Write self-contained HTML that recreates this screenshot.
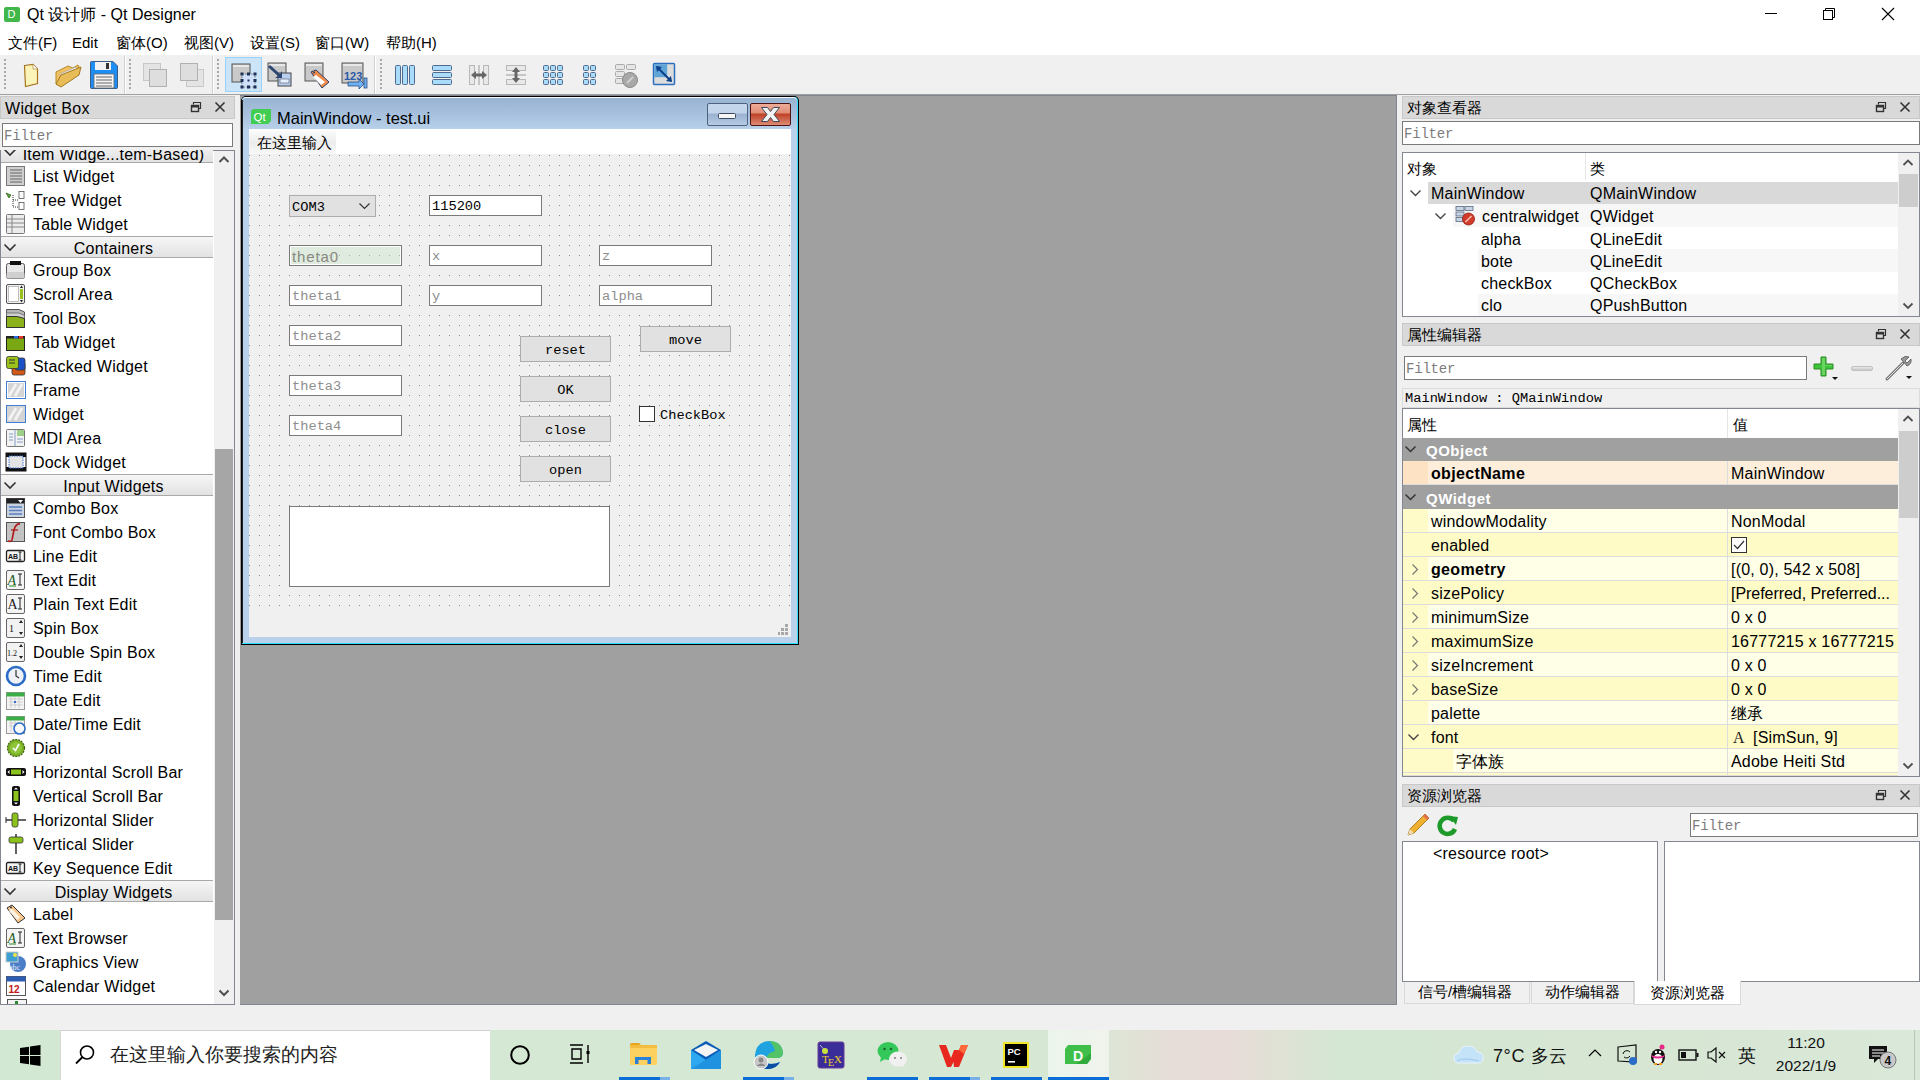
<!DOCTYPE html><html><head><meta charset="utf-8"><style>
*{margin:0;padding:0;box-sizing:border-box}
html,body{width:1920px;height:1080px;overflow:hidden;background:#f0f0f0;font-family:"Liberation Sans",sans-serif;color:#000;position:relative}
.a{position:absolute}
.t{position:absolute;white-space:nowrap;line-height:1}
svg{position:absolute;overflow:visible}
</style></head><body>

<div class="a" style="left:0px;top:0px;width:1920px;height:55px;background:#fff"></div>
<div class="a" style="left:0px;top:55px;width:1920px;height:39px;background:#f0f0f0"></div>
<div class="a" style="left:0px;top:94px;width:1920px;height:1px;background:#a0a0a0"></div>
<div class="a" style="left:4px;top:7px;width:16px;height:15px;background:#41b649;border-radius:2px"></div>
<div class="t" style="left:7.5px;top:9.4px;font-size:11px;color:#fff;font-family:'Liberation Sans',sans-serif;font-weight:normal;letter-spacing:0px;">D</div>
<div class="t" style="left:27px;top:7.2px;font-size:16px;color:#000;font-family:'Liberation Sans',sans-serif;font-weight:normal;letter-spacing:0px;">Qt 设计师 - Qt Designer</div>
<div class="a" style="left:1765px;top:13px;width:12px;height:1px;background:#000"></div>
<svg style="left:1820px;top:5px" width="20" height="20"><rect x="3.5" y="5.5" width="9" height="9" fill="none" stroke="#000"/><path d="M5.5 5.5V3.5H14.5V12.5H12.5" fill="none" stroke="#000"/></svg>
<svg style="left:1880px;top:6px" width="16" height="16"><path d="M2 2L14 14M14 2L2 14" stroke="#000" stroke-width="1.1"/></svg>
<div class="t" style="left:8px;top:35.2px;font-size:15px;color:#000;font-family:'Liberation Sans',sans-serif;font-weight:normal;letter-spacing:0px;">文件(F)</div>
<div class="t" style="left:72px;top:35.2px;font-size:15px;color:#000;font-family:'Liberation Sans',sans-serif;font-weight:normal;letter-spacing:0px;">Edit</div>
<div class="t" style="left:116px;top:35.2px;font-size:15px;color:#000;font-family:'Liberation Sans',sans-serif;font-weight:normal;letter-spacing:0px;">窗体(O)</div>
<div class="t" style="left:184px;top:35.2px;font-size:15px;color:#000;font-family:'Liberation Sans',sans-serif;font-weight:normal;letter-spacing:0px;">视图(V)</div>
<div class="t" style="left:250px;top:35.2px;font-size:15px;color:#000;font-family:'Liberation Sans',sans-serif;font-weight:normal;letter-spacing:0px;">设置(S)</div>
<div class="t" style="left:315px;top:35.2px;font-size:15px;color:#000;font-family:'Liberation Sans',sans-serif;font-weight:normal;letter-spacing:0px;">窗口(W)</div>
<div class="t" style="left:386px;top:35.2px;font-size:15px;color:#000;font-family:'Liberation Sans',sans-serif;font-weight:normal;letter-spacing:0px;">帮助(H)</div>
<div class="a" style="left:4px;top:59px;width:2px;height:2px;background:#a8a8a8"></div>
<div class="a" style="left:4px;top:63px;width:2px;height:2px;background:#a8a8a8"></div>
<div class="a" style="left:4px;top:67px;width:2px;height:2px;background:#a8a8a8"></div>
<div class="a" style="left:4px;top:71px;width:2px;height:2px;background:#a8a8a8"></div>
<div class="a" style="left:4px;top:75px;width:2px;height:2px;background:#a8a8a8"></div>
<div class="a" style="left:4px;top:79px;width:2px;height:2px;background:#a8a8a8"></div>
<div class="a" style="left:4px;top:83px;width:2px;height:2px;background:#a8a8a8"></div>
<div class="a" style="left:4px;top:87px;width:2px;height:2px;background:#a8a8a8"></div>
<div class="a" style="left:129px;top:59px;width:2px;height:2px;background:#a8a8a8"></div>
<div class="a" style="left:129px;top:63px;width:2px;height:2px;background:#a8a8a8"></div>
<div class="a" style="left:129px;top:67px;width:2px;height:2px;background:#a8a8a8"></div>
<div class="a" style="left:129px;top:71px;width:2px;height:2px;background:#a8a8a8"></div>
<div class="a" style="left:129px;top:75px;width:2px;height:2px;background:#a8a8a8"></div>
<div class="a" style="left:129px;top:79px;width:2px;height:2px;background:#a8a8a8"></div>
<div class="a" style="left:129px;top:83px;width:2px;height:2px;background:#a8a8a8"></div>
<div class="a" style="left:129px;top:87px;width:2px;height:2px;background:#a8a8a8"></div>
<div class="a" style="left:217px;top:59px;width:2px;height:2px;background:#a8a8a8"></div>
<div class="a" style="left:217px;top:63px;width:2px;height:2px;background:#a8a8a8"></div>
<div class="a" style="left:217px;top:67px;width:2px;height:2px;background:#a8a8a8"></div>
<div class="a" style="left:217px;top:71px;width:2px;height:2px;background:#a8a8a8"></div>
<div class="a" style="left:217px;top:75px;width:2px;height:2px;background:#a8a8a8"></div>
<div class="a" style="left:217px;top:79px;width:2px;height:2px;background:#a8a8a8"></div>
<div class="a" style="left:217px;top:83px;width:2px;height:2px;background:#a8a8a8"></div>
<div class="a" style="left:217px;top:87px;width:2px;height:2px;background:#a8a8a8"></div>
<div class="a" style="left:380px;top:59px;width:2px;height:2px;background:#a8a8a8"></div>
<div class="a" style="left:380px;top:63px;width:2px;height:2px;background:#a8a8a8"></div>
<div class="a" style="left:380px;top:67px;width:2px;height:2px;background:#a8a8a8"></div>
<div class="a" style="left:380px;top:71px;width:2px;height:2px;background:#a8a8a8"></div>
<div class="a" style="left:380px;top:75px;width:2px;height:2px;background:#a8a8a8"></div>
<div class="a" style="left:380px;top:79px;width:2px;height:2px;background:#a8a8a8"></div>
<div class="a" style="left:380px;top:83px;width:2px;height:2px;background:#a8a8a8"></div>
<div class="a" style="left:380px;top:87px;width:2px;height:2px;background:#a8a8a8"></div>
<div class="a" style="left:124px;top:56px;width:1px;height:38px;background:#d0d0d0"></div>
<div class="a" style="left:125px;top:56px;width:1px;height:38px;background:#fff"></div>
<div class="a" style="left:212px;top:56px;width:1px;height:38px;background:#d0d0d0"></div>
<div class="a" style="left:213px;top:56px;width:1px;height:38px;background:#fff"></div>
<div class="a" style="left:374px;top:56px;width:1px;height:38px;background:#d0d0d0"></div>
<div class="a" style="left:375px;top:56px;width:1px;height:38px;background:#fff"></div>
<svg style="left:22px;top:62px" width="18" height="26"><path d="M2.5 3.5L11 2.5L15.5 7V21.5L3.5 24.5Z" fill="#fbf4b8" stroke="#a6741f" stroke-width="1.2"/><path d="M11 2.5V7H15.5" fill="#fff" stroke="#b89650" stroke-width="0.8"/></svg>
<svg style="left:54px;top:62px" width="28" height="28"><path d="M2 10L14 4L19 6L24 3L25 5L6 24L2 22Z" fill="#f1c15f" stroke="#b58a2b"/><path d="M6 12L22 5L24 8L8 22Z" fill="#f4f4f4" stroke="#a0a0a0" stroke-width=".6"/><path d="M2 22L7 13L27 5L25 13L7 25Z" fill="#e8bd57" stroke="#a07a25"/></svg>
<svg style="left:89px;top:60px" width="30" height="30"><path d="M1.5 2.5Q1.5 1.5 2.5 1.5H24L28.5 6V27.5Q28.5 28.5 27.5 28.5H2.5Q1.5 28.5 1.5 27.5Z" fill="#1e8ef5" stroke="#3a5c85"/><rect x="6" y="2" width="16" height="8" fill="#f2f2f2"/><rect x="17" y="3" width="3" height="6" fill="#333"/><rect x="5" y="14" width="20" height="14" fill="#f4f4f4" stroke="#666" stroke-width=".8"/><path d="M7 17H23M7 20H23M7 23H23M7 26H23" stroke="#666" stroke-width="1"/></svg>
<svg style="left:142px;top:62px" width="28" height="26"><rect x="1.5" y="1.5" width="17" height="17" fill="#e4e4e4" stroke="#c8c8c8"/><rect x="7.5" y="7.5" width="17" height="17" fill="#dedede" stroke="#b0b0b0"/></svg>
<svg style="left:179px;top:62px" width="28" height="26"><rect x="7.5" y="7.5" width="17" height="17" fill="#e4e4e4" stroke="#c8c8c8"/><rect x="1.5" y="1.5" width="17" height="17" fill="#dedede" stroke="#b0b0b0"/></svg>
<div class="a" style="left:225px;top:57px;width:37px;height:35px;background:#cce4f7;border:1px solid #99d1ff"></div>
<svg style="left:231px;top:63px" width="20" height="20"><rect x="1" y="1" width="18" height="18" fill="#c9c9c9" stroke="#555" stroke-width="1"/><rect x="2" y="2" width="16" height="2" fill="#e8e8e8"/></svg>
<svg style="left:240px;top:72px" width="18" height="18"><rect x="2" y="2" width="13" height="13" fill="#cfe0fb" stroke="#333" stroke-width=".6" stroke-dasharray="1.5 1.5"/><g fill="#1f2f55"><rect x="0.5" y="0.5" width="3" height="3"/><rect x="13.5" y="0.5" width="3" height="3"/><rect x="0.5" y="13.5" width="3" height="3"/><rect x="13.5" y="13.5" width="3" height="3"/><rect x="7" y="0.5" width="3" height="3"/><rect x="7" y="13.5" width="3" height="3"/><rect x="0.5" y="7" width="3" height="3"/><rect x="13.5" y="7" width="3" height="3"/><rect x="7.5" y="7.5" width="2" height="2"/></g></svg>
<svg style="left:267px;top:62px" width="20" height="20"><rect x="1" y="1" width="18" height="18" fill="#c9c9c9" stroke="#555" stroke-width="1"/><rect x="2" y="2" width="16" height="2" fill="#e8e8e8"/></svg>
<svg style="left:277px;top:72px" width="16" height="16"><rect x="1" y="1" width="13" height="13" fill="#b9cff0" stroke="#444"/><rect x="3" y="7" width="9" height="4" fill="#e6efff" stroke="#556" stroke-width=".6"/></svg>
<svg style="left:268px;top:64px" width="16" height="16"><path d="M2 1L12 10L14 7L14 14L7 14L10 12L0 3Z" fill="#2c4670"/></svg>
<svg style="left:304px;top:62px" width="20" height="20"><rect x="1" y="1" width="18" height="18" fill="#c9c9c9" stroke="#555" stroke-width="1"/><rect x="2" y="2" width="16" height="2" fill="#e8e8e8"/></svg>
<svg style="left:309px;top:68px" width="22" height="22"><path d="M2 4L7 2L20 14L13 20Z" fill="#f28a4a" stroke="#27406a" stroke-width="1"/><path d="M7 7L16 14L12 17L4 9Z" fill="#fff"/><circle cx="5" cy="4.5" r="1" fill="#27406a"/></svg>
<svg style="left:341px;top:62px" width="23" height="22"><rect x="1" y="1" width="21" height="20" fill="#c9c9c9" stroke="#555" stroke-width="1"/><rect x="2" y="2" width="19" height="2" fill="#e8e8e8"/></svg>
<svg style="left:342px;top:68px" width="26" height="22"><text x="2" y="12" font-family="Liberation Sans" font-size="11" font-weight="bold" fill="#2a5aa8">123</text><path d="M6 14H17V11L22 16L17 21V18H6Z" fill="#6fb0f0" stroke="#2a4f80" stroke-width=".8"/><rect x="22" y="10" width="3" height="10" fill="#6fb0f0" stroke="#2a4f80" stroke-width=".8"/></svg>
<svg style="left:394px;top:64px" width="24" height="24"><g fill="#a8dcfa" stroke="#4f6a8f" stroke-width="1"><rect x="1.5" y="1.5" width="5" height="19" rx="1"/><rect x="8.5" y="1.5" width="5" height="19" rx="1"/><rect x="15.5" y="1.5" width="5" height="19" rx="1"/></g></svg>
<svg style="left:431px;top:64px" width="24" height="24"><g fill="#a8dcfa" stroke="#4f6a8f" stroke-width="1"><rect x="1.5" y="1.5" width="19" height="5" rx="1"/><rect x="1.5" y="8.5" width="19" height="5" rx="1"/><rect x="1.5" y="15.5" width="19" height="5" rx="1"/></g></svg>
<svg style="left:468px;top:64px" width="24" height="24"><g fill="#e8e8e8" stroke="#b8b8b8"><rect x="1.5" y="1.5" width="5" height="19"/><rect x="15.5" y="1.5" width="5" height="19"/></g><path d="M3 11L8 7V9.5H14V7L19 11L14 15V12.5H8V15Z" fill="#666"/><path d="M11 1V21" stroke="#666" stroke-width=".6"/></svg>
<svg style="left:505px;top:64px" width="24" height="24"><g fill="#e8e8e8" stroke="#b8b8b8"><rect x="1.5" y="1.5" width="19" height="5"/><rect x="1.5" y="15.5" width="19" height="5"/></g><path d="M11 3L15 8H12.5V14H15L11 19L7 14H9.5V8H7Z" fill="#666"/><path d="M1 11H21" stroke="#666" stroke-width=".6"/></svg>
<svg style="left:542px;top:64px" width="23" height="23"><g fill="#a8dcfa" stroke="#4f6a8f" stroke-width="1"><rect x="1.5" y="1.5" width="5" height="5" rx="1"/><rect x="1.5" y="8.5" width="5" height="5" rx="1"/><rect x="1.5" y="15.5" width="5" height="5" rx="1"/><rect x="8.5" y="1.5" width="5" height="5" rx="1"/><rect x="8.5" y="8.5" width="5" height="5" rx="1"/><rect x="8.5" y="15.5" width="5" height="5" rx="1"/><rect x="15.5" y="1.5" width="5" height="5" rx="1"/><rect x="15.5" y="8.5" width="5" height="5" rx="1"/><rect x="15.5" y="15.5" width="5" height="5" rx="1"/></g></svg>
<svg style="left:582px;top:64px" width="16" height="23"><g fill="#a8dcfa" stroke="#4f6a8f" stroke-width="1"><rect x="1.5" y="1.5" width="5" height="5" rx="1"/><rect x="1.5" y="8.5" width="5" height="5" rx="1"/><rect x="1.5" y="15.5" width="5" height="5" rx="1"/><rect x="8.5" y="1.5" width="5" height="5" rx="1"/><rect x="8.5" y="8.5" width="5" height="5" rx="1"/><rect x="8.5" y="15.5" width="5" height="5" rx="1"/></g></svg>
<svg style="left:614px;top:62px" width="26" height="28"><g fill="#e6e6e6" stroke="#aaa"><rect x="1.5" y="2.5" width="9" height="5" rx="1"/><rect x="12.5" y="2.5" width="9" height="5" rx="1"/><rect x="1.5" y="9.5" width="9" height="5" rx="1"/><rect x="1.5" y="16.5" width="9" height="5" rx="1"/></g><circle cx="16" cy="18" r="7.5" fill="#a8a8a8" stroke="#8a8a8a"/><path d="M13 21L19 15" stroke="#cfcfcf" stroke-width="2"/></svg>
<svg style="left:652px;top:62px" width="26" height="26"><rect x="1.5" y="1.5" width="21" height="21" rx="1" fill="#dcdcdc" stroke="#2c6fc0" stroke-width="1.5"/><rect x="2.2" y="2.2" width="13" height="13" fill="#5fa5d8"/><path d="M5 5L19 19" stroke="#0b3f8a" stroke-width="2"/><path d="M4 4L10 5L5 10Z M20 20L14 19L19 14Z" fill="#0b3f8a"/></svg>
<div class="a" style="left:240px;top:95px;width:1157px;height:910px;background:#a0a0a0;border:1px solid #7f868e;border-left:none"></div>
<div class="a" style="left:0px;top:96px;width:235px;height:23px;background:#d9d9d9;border:1px solid #c8c8c8"></div>
<div class="t" style="left:5px;top:100.7px;font-size:16px;color:#000;font-family:'Liberation Sans',sans-serif;font-weight:normal;letter-spacing:0.3px;">Widget Box</div>
<svg style="left:190px;top:101px" width="12" height="12"><path d="M3.5 3.5V1.5H10.5V7.5H8.5" fill="none" stroke="#333" stroke-width="1.2"/><rect x="1.5" y="4.5" width="7" height="6" fill="none" stroke="#333" stroke-width="1.4"/><rect x="1.5" y="4.5" width="7" height="2" fill="#333"/></svg>
<svg style="left:214px;top:101px" width="12" height="12"><path d="M1.5 1.5L10.5 10.5M10.5 1.5L1.5 10.5" stroke="#333" stroke-width="1.6"/></svg>
<div class="a" style="left:2px;top:123px;width:231px;height:24px;background:#fff;border:1px solid #7a7a7a"></div>
<div class="t" style="left:4px;top:128.5px;font-size:14px;color:#7c7c7c;font-family:'Liberation Mono',monospace;letter-spacing:-0.2px">Filter</div>
<div class="a" style="left:0px;top:150px;width:235px;height:855px;background:#fff;border:1px solid #828790"></div>
<div class="a" style="left:214px;top:151px;width:20px;height:853px;background:#f0f0f0"></div>
<div class="a" style="left:215px;top:449px;width:18px;height:471px;background:#a6a6a6"></div>
<svg style="left:218px;top:155px" width="12" height="10"><path d="M1.5 7L6 2.5L10.5 7" fill="none" stroke="#505050" stroke-width="2"/></svg>
<svg style="left:218px;top:989px" width="12" height="10"><path d="M1.5 1.5L6 6L10.5 1.5" fill="none" stroke="#505050" stroke-width="2"/></svg>
<div class="a" style="left:1px;top:150px;width:212px;height:13px;overflow:hidden"><div class="a" style="left:0;top:-9px;width:212px;height:22px;background:linear-gradient(#f6f6f6,#e2e2e2);border-top:1px solid #a9a9a9;border-bottom:1px solid #a9a9a9"></div><svg style="left:2px;top:-2.0px" width="14" height="9"><path d="M1.5 1.5L7 7L12.5 1.5" fill="none" stroke="#333" stroke-width="1.6"/></svg><div class="t" style="left:0;width:225px;text-align:center;top:-3.0px;font-size:16px;letter-spacing:.2px">Item Widge...tem-Based)</div></div>
<svg style="left:5px;top:165px" width="22" height="22"><rect x="1.5" y="1.5" width="18" height="19" fill="#cfcfcf" stroke="#777"/><path d="M5 5H17M5 8H17M5 11H17M5 14H17M5 17H17" stroke="#888" stroke-width="1.3"/></svg>
<div class="t" style="left:33px;top:168.7px;font-size:16px;color:#000;font-family:'Liberation Sans',sans-serif;font-weight:normal;letter-spacing:0.2px;">List Widget</div>
<svg style="left:5px;top:189px" width="22" height="22"><path d="M1 4L6 6L4 9Z" fill="#5aa63a" stroke="#2d5a1b" stroke-width=".7"/><path d="M8 6V18H13M8 11H13" fill="none" stroke="#333" stroke-dasharray="1 1"/><rect x="14" y="2.5" width="5" height="7" fill="#fff" stroke="#555" stroke-width=".8"/><rect x="14" y="13.5" width="5" height="7" fill="#fff" stroke="#555" stroke-width=".8"/></svg>
<div class="t" style="left:33px;top:192.7px;font-size:16px;color:#000;font-family:'Liberation Sans',sans-serif;font-weight:normal;letter-spacing:0.2px;">Tree Widget</div>
<svg style="left:5px;top:213px" width="22" height="22"><rect x="1.5" y="1.5" width="18" height="19" rx="1" fill="#ececec" stroke="#777"/><path d="M1.5 6H19.5M1.5 10H19.5M1.5 14H19.5M7 1.5V20.5" stroke="#888" stroke-width="1"/></svg>
<div class="t" style="left:33px;top:216.7px;font-size:16px;color:#000;font-family:'Liberation Sans',sans-serif;font-weight:normal;letter-spacing:0.2px;">Table Widget</div>
<div class="a" style="left:1px;top:236px;width:212px;height:22px;overflow:hidden"><div class="a" style="left:0;top:0px;width:212px;height:22px;background:linear-gradient(#f6f6f6,#e2e2e2);border-top:1px solid #a9a9a9;border-bottom:1px solid #a9a9a9"></div><svg style="left:2px;top:7.0px" width="14" height="9"><path d="M1.5 1.5L7 7L12.5 1.5" fill="none" stroke="#333" stroke-width="1.6"/></svg><div class="t" style="left:0;width:225px;text-align:center;top:4.5px;font-size:16px;letter-spacing:.2px">Containers</div></div>
<svg style="left:5px;top:259px" width="22" height="22"><rect x="1.5" y="4.5" width="18" height="15" rx="2" fill="#e8e8e8" stroke="#555"/><rect x="1.5" y="13" width="18" height="6.5" rx="2" fill="#cfcfcf"/><rect x="5" y="2" width="11" height="4" fill="#111"/></svg>
<div class="t" style="left:33px;top:262.7px;font-size:16px;color:#000;font-family:'Liberation Sans',sans-serif;font-weight:normal;letter-spacing:0.2px;">Group Box</div>
<svg style="left:5px;top:283px" width="22" height="22"><rect x="1.5" y="1.5" width="18" height="19" rx="1.5" fill="#f0f0f0" stroke="#555"/><rect x="3.5" y="3.5" width="10" height="15" fill="#fff" stroke="#999" stroke-width=".6"/><rect x="15" y="6" width="3" height="10" fill="#9ac21c"/><path d="M16.5 2.5L15 5H18ZM16.5 19.5L15 17H18Z" fill="#222"/></svg>
<div class="t" style="left:33px;top:286.7px;font-size:16px;color:#000;font-family:'Liberation Sans',sans-serif;font-weight:normal;letter-spacing:0.2px;">Scroll Area</div>
<svg style="left:5px;top:307px" width="22" height="22"><path d="M1.5 2.5H14L19.5 5V20.5H1.5Z" fill="#b8b8b8" stroke="#555"/><path d="M1.5 6L14 6L19.5 8.5V20.5H1.5Z" fill="#d0d0d0" stroke="#666" stroke-width=".8"/><path d="M1.5 9.5H12L19.5 11.5V20.5H1.5Z" fill="#8cb21b" stroke="#333"/></svg>
<div class="t" style="left:33px;top:310.7px;font-size:16px;color:#000;font-family:'Liberation Sans',sans-serif;font-weight:normal;letter-spacing:0.2px;">Tool Box</div>
<svg style="left:5px;top:331px" width="22" height="22"><rect x="1.5" y="5.5" width="18" height="14" fill="#7aa812" stroke="#222"/><rect x="1.5" y="5.5" width="18" height="2" fill="#222"/><rect x="9" y="5" width="4" height="2.5" fill="#2a6de0"/><rect x="14" y="5" width="4" height="2.5" fill="#e33"/></svg>
<div class="t" style="left:33px;top:334.7px;font-size:16px;color:#000;font-family:'Liberation Sans',sans-serif;font-weight:normal;letter-spacing:0.2px;">Tab Widget</div>
<svg style="left:5px;top:355px" width="22" height="22"><rect x="7" y="7" width="13" height="13" rx="2" fill="#d25a16" stroke="#333" stroke-width=".8"/><rect x="10" y="3" width="10" height="12" rx="2" fill="#1c52c8" stroke="#333" stroke-width=".8"/><rect x="1.5" y="1.5" width="12" height="12" rx="2" fill="#9bc21a" stroke="#333" stroke-width=".8"/><path d="M4 5H10M4 8H10" stroke="#333"/></svg>
<div class="t" style="left:33px;top:358.7px;font-size:16px;color:#000;font-family:'Liberation Sans',sans-serif;font-weight:normal;letter-spacing:0.2px;">Stacked Widget</div>
<svg style="left:5px;top:379px" width="22" height="22"><rect x="1.5" y="2.5" width="19" height="17" fill="#fff" stroke="#3f7fd6"/><rect x="3" y="4" width="16" height="14" fill="#d4d4d4"/><path d="M4 17L11 5M10 17L17 5" stroke="#f2f2f2" stroke-width="3"/></svg>
<div class="t" style="left:33px;top:382.7px;font-size:16px;color:#000;font-family:'Liberation Sans',sans-serif;font-weight:normal;letter-spacing:0.2px;">Frame</div>
<svg style="left:5px;top:403px" width="22" height="22"><rect x="1.5" y="2.5" width="19" height="17" fill="#d4d4d4" stroke="#3f7fd6"/><path d="M4 17L11 5M10 17L17 5" stroke="#f2f2f2" stroke-width="3"/></svg>
<div class="t" style="left:33px;top:406.7px;font-size:16px;color:#000;font-family:'Liberation Sans',sans-serif;font-weight:normal;letter-spacing:0.2px;">Widget</div>
<svg style="left:5px;top:427px" width="22" height="22"><rect x="1.5" y="2.5" width="18" height="17" rx="1" fill="#f2f2f2" stroke="#777"/><rect x="12" y="3" width="7" height="6" fill="#9fd08a"/><path d="M10 3V19M4 7H8M4 10H8M4 13H8M12 12H18M12 15H18" stroke="#7791c0" stroke-width=".9"/></svg>
<div class="t" style="left:33px;top:430.7px;font-size:16px;color:#000;font-family:'Liberation Sans',sans-serif;font-weight:normal;letter-spacing:0.2px;">MDI Area</div>
<svg style="left:5px;top:451px" width="22" height="22"><rect x="1" y="2" width="20" height="18" fill="#fff" stroke="#111"/><rect x="1" y="2" width="20" height="4" fill="#111"/><rect x="1" y="16" width="20" height="4" fill="#111"/><rect x="4" y="5" width="14" height="12" fill="#e4e4e4" stroke="#3a6fd0" stroke-dasharray="1.5 1"/></svg>
<div class="t" style="left:33px;top:454.7px;font-size:16px;color:#000;font-family:'Liberation Sans',sans-serif;font-weight:normal;letter-spacing:0.2px;">Dock Widget</div>
<div class="a" style="left:1px;top:474px;width:212px;height:22px;overflow:hidden"><div class="a" style="left:0;top:0px;width:212px;height:22px;background:linear-gradient(#f6f6f6,#e2e2e2);border-top:1px solid #a9a9a9;border-bottom:1px solid #a9a9a9"></div><svg style="left:2px;top:7.0px" width="14" height="9"><path d="M1.5 1.5L7 7L12.5 1.5" fill="none" stroke="#333" stroke-width="1.6"/></svg><div class="t" style="left:0;width:225px;text-align:center;top:4.5px;font-size:16px;letter-spacing:.2px">Input Widgets</div></div>
<svg style="left:5px;top:497px" width="22" height="22"><rect x="1.5" y="1.5" width="18" height="19" fill="#c8d2e0" stroke="#555"/><rect x="1.5" y="1.5" width="18" height="5" fill="#222"/><path d="M13 3H18L15.5 6Z" fill="#fff"/><path d="M4 10H17M4 13.5H17M4 17H17" stroke="#5b7fc0" stroke-width="1.6"/></svg>
<div class="t" style="left:33px;top:500.7px;font-size:16px;color:#000;font-family:'Liberation Sans',sans-serif;font-weight:normal;letter-spacing:0.2px;">Combo Box</div>
<svg style="left:5px;top:521px" width="22" height="22"><rect x="1.5" y="1.5" width="18" height="19" fill="#c4c4c4" stroke="#555"/><path d="M4 5H17M4 9H17M4 13H17M4 17H17" stroke="#bbb"/><path d="M15 3Q11 2 9 9L7 19Q6 21 3 20" fill="none" stroke="#b01818" stroke-width="1.6"/><path d="M6 9H13" stroke="#b01818" stroke-width="1.2"/></svg>
<div class="t" style="left:33px;top:524.7px;font-size:16px;color:#000;font-family:'Liberation Sans',sans-serif;font-weight:normal;letter-spacing:0.2px;">Font Combo Box</div>
<svg style="left:5px;top:545px" width="22" height="22"><rect x="1.5" y="5.5" width="18" height="11" rx="1.5" fill="#f4f4f4" stroke="#222" stroke-width="1.3"/><text x="3" y="14" font-size="7" font-weight="bold" font-family="Liberation Sans" fill="#111">AB</text><path d="M15 7V15M13.5 7H16.5M13.5 15H16.5" stroke="#111" stroke-width=".9"/></svg>
<div class="t" style="left:33px;top:548.7px;font-size:16px;color:#000;font-family:'Liberation Sans',sans-serif;font-weight:normal;letter-spacing:0.2px;">Line Edit</div>
<svg style="left:5px;top:569px" width="22" height="22"><rect x="1.5" y="1.5" width="18" height="19" rx="1.5" fill="#f4f4f4" stroke="#666"/><text x="2.5" y="15.5" font-size="14" font-style="italic" font-family="Liberation Serif" fill="#1d5c1d">A</text><path d="M4 17H11" stroke="#2a8a2a"/><path d="M15 5V16M13 5H17M13 16H17" stroke="#222"/></svg>
<div class="t" style="left:33px;top:572.7px;font-size:16px;color:#000;font-family:'Liberation Sans',sans-serif;font-weight:normal;letter-spacing:0.2px;">Text Edit</div>
<svg style="left:5px;top:593px" width="22" height="22"><rect x="1.5" y="1.5" width="18" height="19" rx="1.5" fill="#f4f4f4" stroke="#666"/><text x="2.5" y="15.5" font-size="14" font-family="Liberation Serif" fill="#222">A</text><path d="M15 5V16M13 5H17M13 16H17" stroke="#222"/></svg>
<div class="t" style="left:33px;top:596.7px;font-size:16px;color:#000;font-family:'Liberation Sans',sans-serif;font-weight:normal;letter-spacing:0.2px;">Plain Text Edit</div>
<svg style="left:5px;top:617px" width="22" height="22"><rect x="1.5" y="1.5" width="18" height="19" rx="1.5" fill="#f2f2f2" stroke="#666"/><text x="4" y="14.5" font-size="10" font-family="Liberation Serif" fill="#111">1</text><path d="M14 6L16 3L18 6ZM14 15L16 18L18 15Z" fill="#222"/></svg>
<div class="t" style="left:33px;top:620.7px;font-size:16px;color:#000;font-family:'Liberation Sans',sans-serif;font-weight:normal;letter-spacing:0.2px;">Spin Box</div>
<svg style="left:5px;top:641px" width="22" height="22"><rect x="1.5" y="1.5" width="18" height="19" rx="1.5" fill="#f2f2f2" stroke="#666"/><text x="2" y="14.5" font-size="8" font-family="Liberation Serif" fill="#111">1.2</text><path d="M14 6L16 3L18 6ZM14 15L16 18L18 15Z" fill="#222"/></svg>
<div class="t" style="left:33px;top:644.7px;font-size:16px;color:#000;font-family:'Liberation Sans',sans-serif;font-weight:normal;letter-spacing:0.2px;">Double Spin Box</div>
<svg style="left:5px;top:665px" width="22" height="22"><circle cx="11" cy="11" r="9" fill="#eef2f6" stroke="#2a6cc8" stroke-width="2.6"/><path d="M11 5V11L14 13" stroke="#333" stroke-width="1.2" fill="none"/></svg>
<div class="t" style="left:33px;top:668.7px;font-size:16px;color:#000;font-family:'Liberation Sans',sans-serif;font-weight:normal;letter-spacing:0.2px;">Time Edit</div>
<svg style="left:5px;top:689px" width="22" height="22"><rect x="1.5" y="3.5" width="18" height="17" fill="#f4f4f4" stroke="#999"/><rect x="1.5" y="3.5" width="18" height="4" fill="#3dad47"/><path d="M4 10H18M4 13H18M4 16H18M6 8V19M10 8V19M14 8V19" stroke="#c8c8c8" stroke-width=".8"/><rect x="9" y="12" width="2" height="2" fill="#3a6fd0"/></svg>
<div class="t" style="left:33px;top:692.7px;font-size:16px;color:#000;font-family:'Liberation Sans',sans-serif;font-weight:normal;letter-spacing:0.2px;">Date Edit</div>
<svg style="left:5px;top:713px" width="22" height="22"><rect x="1.5" y="3.5" width="18" height="17" fill="#f4f4f4" stroke="#999"/><rect x="1.5" y="3.5" width="18" height="4" fill="#3dad47"/><path d="M4 10H18M4 13H18M6 8V19M10 8V19" stroke="#c8c8c8" stroke-width=".8"/><circle cx="14.5" cy="15.5" r="5.5" fill="#f8f8f8" stroke="#2a6cc8" stroke-width="1.6"/></svg>
<div class="t" style="left:33px;top:716.7px;font-size:16px;color:#000;font-family:'Liberation Sans',sans-serif;font-weight:normal;letter-spacing:0.2px;">Date/Time Edit</div>
<svg style="left:5px;top:737px" width="22" height="22"><circle cx="11" cy="11" r="8.5" fill="#7aae25" stroke="#3d6010" stroke-width="1.2" stroke-dasharray="2 1"/><circle cx="11" cy="11" r="6" fill="#8cc43a"/><path d="M8 11L10.5 13.5L14 7" stroke="#fff" stroke-width="1.6" fill="none"/></svg>
<div class="t" style="left:33px;top:740.7px;font-size:16px;color:#000;font-family:'Liberation Sans',sans-serif;font-weight:normal;letter-spacing:0.2px;">Dial</div>
<svg style="left:5px;top:761px" width="22" height="22"><rect x="1" y="7" width="20" height="8" rx="2" fill="#111"/><rect x="6" y="8.5" width="10" height="5" fill="#8cc21c"/><path d="M2.5 11L4.5 9V13ZM19.5 11L17.5 9V13Z" fill="#fff"/></svg>
<div class="t" style="left:33px;top:764.7px;font-size:16px;color:#000;font-family:'Liberation Sans',sans-serif;font-weight:normal;letter-spacing:0.2px;">Horizontal Scroll Bar</div>
<svg style="left:5px;top:785px" width="22" height="22"><rect x="7" y="1" width="8" height="20" rx="2" fill="#111"/><rect x="8.5" y="6" width="5" height="10" fill="#8cc21c"/><path d="M11 2.5L9 4.5H13ZM11 19.5L9 17.5H13Z" fill="#fff"/></svg>
<div class="t" style="left:33px;top:788.7px;font-size:16px;color:#000;font-family:'Liberation Sans',sans-serif;font-weight:normal;letter-spacing:0.2px;">Vertical Scroll Bar</div>
<svg style="left:5px;top:809px" width="22" height="22"><path d="M1 11H21" stroke="#222" stroke-width="1.4"/><path d="M1 8V14" stroke="#222"/><rect x="7" y="4" width="6" height="14" rx="2" fill="#8cc21c" stroke="#333" stroke-width=".8"/></svg>
<div class="t" style="left:33px;top:812.7px;font-size:16px;color:#000;font-family:'Liberation Sans',sans-serif;font-weight:normal;letter-spacing:0.2px;">Horizontal Slider</div>
<svg style="left:5px;top:833px" width="22" height="22"><path d="M11 1V21" stroke="#222" stroke-width="1.4"/><rect x="4" y="4" width="14" height="6" rx="2" fill="#8cc21c" stroke="#333" stroke-width=".8"/></svg>
<div class="t" style="left:33px;top:836.7px;font-size:16px;color:#000;font-family:'Liberation Sans',sans-serif;font-weight:normal;letter-spacing:0.2px;">Vertical Slider</div>
<svg style="left:5px;top:857px" width="22" height="22"><rect x="1.5" y="5.5" width="18" height="11" rx="1.5" fill="#f4f4f4" stroke="#222" stroke-width="1.3"/><text x="3" y="14" font-size="7" font-weight="bold" font-family="Liberation Sans" fill="#111">AB</text><path d="M15 7V15M13.5 7H16.5M13.5 15H16.5" stroke="#111" stroke-width=".9"/></svg>
<div class="t" style="left:33px;top:860.7px;font-size:16px;color:#000;font-family:'Liberation Sans',sans-serif;font-weight:normal;letter-spacing:0.2px;">Key Sequence Edit</div>
<div class="a" style="left:1px;top:880px;width:212px;height:22px;overflow:hidden"><div class="a" style="left:0;top:0px;width:212px;height:22px;background:linear-gradient(#f6f6f6,#e2e2e2);border-top:1px solid #a9a9a9;border-bottom:1px solid #a9a9a9"></div><svg style="left:2px;top:7.0px" width="14" height="9"><path d="M1.5 1.5L7 7L12.5 1.5" fill="none" stroke="#333" stroke-width="1.6"/></svg><div class="t" style="left:0;width:225px;text-align:center;top:4.5px;font-size:16px;letter-spacing:.2px">Display Widgets</div></div>
<svg style="left:5px;top:903px" width="22" height="22"><path d="M2 5L7 2L20 15L13 20Z" fill="#f9c88d" stroke="#333" stroke-width="1"/><path d="M6 5L15 14L12 17L4 8Z" fill="#fff4e4"/><circle cx="6" cy="4.5" r="1" fill="#333"/></svg>
<div class="t" style="left:33px;top:906.7px;font-size:16px;color:#000;font-family:'Liberation Sans',sans-serif;font-weight:normal;letter-spacing:0.2px;">Label</div>
<svg style="left:5px;top:927px" width="22" height="22"><rect x="1.5" y="1.5" width="18" height="19" rx="1.5" fill="#f4f4f4" stroke="#666"/><text x="2.5" y="15.5" font-size="14" font-style="italic" font-family="Liberation Serif" fill="#1d5c1d">A</text><path d="M4 17H11" stroke="#2a8a2a"/><path d="M15 5V16M13 5H17M13 16H17" stroke="#222"/></svg>
<div class="t" style="left:33px;top:930.7px;font-size:16px;color:#000;font-family:'Liberation Sans',sans-serif;font-weight:normal;letter-spacing:0.2px;">Text Browser</div>
<svg style="left:5px;top:951px" width="22" height="22"><circle cx="13" cy="13" r="8" fill="#4a7ec8"/><rect x="1" y="1" width="12" height="10" fill="#3da0d0" stroke="#ccc"/><circle cx="10" cy="4" r="2" fill="#f4e04a"/><text x="4" y="19" font-size="8" font-family="Liberation Serif" fill="#e8eef8">abc</text></svg>
<div class="t" style="left:33px;top:954.7px;font-size:16px;color:#000;font-family:'Liberation Sans',sans-serif;font-weight:normal;letter-spacing:0.2px;">Graphics View</div>
<svg style="left:5px;top:975px" width="22" height="22"><rect x="1.5" y="1.5" width="19" height="19" fill="#fff" stroke="#555"/><rect x="1.5" y="1.5" width="19" height="5" fill="#2d5db2"/><text x="3.5" y="18" font-size="10" font-weight="bold" font-family="Liberation Sans" fill="#c01818">12</text></svg>
<div class="t" style="left:33px;top:978.7px;font-size:16px;color:#000;font-family:'Liberation Sans',sans-serif;font-weight:normal;letter-spacing:0.2px;">Calendar Widget</div>
<div class="a" style="left:6px;top:998px;width:22px;height:6px;overflow:hidden"><svg style="left:0;top:0" width="22" height="22"><rect x="1.5" y="1.5" width="19" height="19" fill="#f4f4f4" stroke="#555"/><rect x="9" y="3" width="3" height="3" fill="#2a8a2a"/></svg></div>
<div class="a" style="left:241px;top:96px;width:558px;height:549px;background:#000;border-radius:5px 5px 0 0"></div>
<div class="a" style="left:242px;top:97px;width:556px;height:547px;background:#2ee0ff;border-radius:4px 4px 0 0"></div>
<div class="a" style="left:242px;top:97px;width:555px;height:546px;background:linear-gradient(#99b4d1 0px,#a6c0dd 16px,#b9d1ea 32px,#b9d1ea 100%);border-radius:4px 4px 0 0;border-top:1px solid #f4f8fc"></div>
<div class="a" style="left:242px;top:100px;width:1px;height:543px;background:#222"></div>
<svg style="left:250px;top:108px" width="23" height="18"><path d="M3 1H21V13L18 16H1V3Z" fill="#41cd52"/><text x="3.5" y="12.5" font-family="Liberation Sans" font-size="11.5" fill="#fff">Qt</text></svg>
<div class="t" style="left:277px;top:110.4px;font-size:16.5px;color:#000;font-family:'Liberation Sans',sans-serif;font-weight:normal;letter-spacing:0px;">MainWindow - test.ui</div>
<svg style="left:706px;top:102px" width="44" height="26"><defs><linearGradient id="gm" x1="0" y1="0" x2="0" y2="1"><stop offset="0" stop-color="#c6d7ec"/><stop offset=".45" stop-color="#c0d3ea"/><stop offset=".46" stop-color="#98b0cf"/><stop offset="1" stop-color="#b7cce6"/></linearGradient></defs><rect x="1.5" y="1.5" width="40" height="22" rx="1.5" fill="url(#gm)" stroke="#4f6280"/><rect x="12.5" y="11.5" width="17" height="5" rx="1" fill="#f6f6f6" stroke="#3c4a60"/></svg>
<svg style="left:749px;top:102px" width="44" height="26"><defs><linearGradient id="gc" x1="0" y1="0" x2="0" y2="1"><stop offset="0" stop-color="#eeae9c"/><stop offset=".45" stop-color="#df8a72"/><stop offset=".46" stop-color="#bd3d24"/><stop offset="1" stop-color="#e08f78"/></linearGradient></defs><rect x="1.5" y="1.5" width="40" height="22" rx="1.5" fill="url(#gc)" stroke="#4d1414"/><path d="M12.5 5.5L18.5 5.5L21.5 9.5L24.5 5.5L30.5 5.5L25 12.5L30.5 19.5H24.5L21.5 15.5L18.5 19.5H12.5L18 12.5Z" fill="#f2f2f2" stroke="#404a5a" stroke-width="1"/></svg>
<div class="a" style="left:249px;top:129px;width:542px;height:25px;background:#fff"></div>
<div class="a" style="left:249px;top:129px;width:87px;height:25px;background:linear-gradient(#fdfdfd,#ececec 55%,#f8f8f8)"></div>
<div class="t" style="left:257px;top:134.8px;font-size:15px;color:#000;font-family:'Liberation Sans',sans-serif;font-weight:normal;letter-spacing:0px;">在这里输入</div>
<svg style="left:249px;top:154px" width="542" height="483"><defs><pattern id="dots" x="0" y="1" width="10" height="10" patternUnits="userSpaceOnUse"><rect width="1" height="1" fill="#8a8a8a"/></pattern></defs><rect width="542" height="483" fill="#f0f0f0"/><rect width="542" height="455" fill="url(#dots)"/></svg>
<svg style="left:777px;top:624px" width="14" height="14"><g fill="#a8a8a8"><rect x="8" y="0" width="3" height="3"/><rect x="4" y="4" width="3" height="3"/><rect x="8" y="4" width="3" height="3"/><rect x="1" y="8" width="2" height="3"/><rect x="4" y="8" width="3" height="3"/><rect x="8" y="8" width="3" height="3"/></g></svg>
<div class="a" style="left:289px;top:195px;width:87px;height:22px;background:#e1e1e1;border:1px solid #adadad"></div>
<div class="t" style="left:292px;top:200.5px;font-size:13.7px;color:#000;font-family:'Liberation Mono',monospace;font-weight:normal;letter-spacing:0px;">COM3</div>
<svg style="left:358px;top:202px" width="14" height="9"><path d="M1.5 1.5L6.5 6.5L11.5 1.5" fill="none" stroke="#333" stroke-width="1.2"/></svg>
<div class="a" style="left:429px;top:195px;width:113px;height:21px;background:#fff;border:1px solid #7a7a7a"></div>
<div class="t" style="left:432px;top:199.5px;font-size:13.7px;color:#000;font-family:'Liberation Mono',monospace;font-weight:normal;letter-spacing:0px;">115200</div>
<div class="a" style="left:289px;top:245px;width:113px;height:21px;background:transparent;border:1px solid #7a7a7a;box-shadow:inset 0 0 0 1px #fff"></div>
<div class="a" style="left:291px;top:247px;width:109px;height:17px;background:rgba(200,228,198,.42)"></div>
<div class="t" style="left:292px;top:249.2px;font-size:15px;color:#888880;font-family:'Liberation Sans',sans-serif;font-weight:normal;letter-spacing:0.9px;">theta0</div>
<div class="a" style="left:429px;top:245px;width:113px;height:21px;background:#fff;border:1px solid #7a7a7a"></div>
<div class="t" style="left:432px;top:249.5px;font-size:13.7px;color:#8e8e8e;font-family:'Liberation Mono',monospace;font-weight:normal;letter-spacing:0px;">x</div>
<div class="a" style="left:599px;top:245px;width:113px;height:21px;background:#fff;border:1px solid #7a7a7a"></div>
<div class="t" style="left:602px;top:249.5px;font-size:13.7px;color:#8e8e8e;font-family:'Liberation Mono',monospace;font-weight:normal;letter-spacing:0px;">z</div>
<div class="a" style="left:289px;top:285px;width:113px;height:21px;background:#fff;border:1px solid #7a7a7a"></div>
<div class="t" style="left:292px;top:289.5px;font-size:13.7px;color:#8e8e8e;font-family:'Liberation Mono',monospace;font-weight:normal;letter-spacing:0px;">theta1</div>
<div class="a" style="left:429px;top:285px;width:113px;height:21px;background:#fff;border:1px solid #7a7a7a"></div>
<div class="t" style="left:432px;top:289.5px;font-size:13.7px;color:#8e8e8e;font-family:'Liberation Mono',monospace;font-weight:normal;letter-spacing:0px;">y</div>
<div class="a" style="left:599px;top:285px;width:113px;height:21px;background:#fff;border:1px solid #7a7a7a"></div>
<div class="t" style="left:602px;top:289.5px;font-size:13.7px;color:#8e8e8e;font-family:'Liberation Mono',monospace;font-weight:normal;letter-spacing:0px;">alpha</div>
<div class="a" style="left:289px;top:325px;width:113px;height:21px;background:#fff;border:1px solid #7a7a7a"></div>
<div class="t" style="left:292px;top:329.5px;font-size:13.7px;color:#8e8e8e;font-family:'Liberation Mono',monospace;font-weight:normal;letter-spacing:0px;">theta2</div>
<div class="a" style="left:289px;top:375px;width:113px;height:21px;background:#fff;border:1px solid #7a7a7a"></div>
<div class="t" style="left:292px;top:379.5px;font-size:13.7px;color:#8e8e8e;font-family:'Liberation Mono',monospace;font-weight:normal;letter-spacing:0px;">theta3</div>
<div class="a" style="left:289px;top:415px;width:113px;height:21px;background:#fff;border:1px solid #7a7a7a"></div>
<div class="t" style="left:292px;top:419.5px;font-size:13.7px;color:#8e8e8e;font-family:'Liberation Mono',monospace;font-weight:normal;letter-spacing:0px;">theta4</div>
<div class="a" style="left:520px;top:336px;width:91px;height:26px;background:#e1e1e1;border:1px solid #adadad"></div>
<div class="t" style="left:520px;width:91px;text-align:center;top:343.5px;font-size:13.7px;font-family:'Liberation Mono',monospace;color:#000">reset</div>
<div class="a" style="left:520px;top:376px;width:91px;height:26px;background:#e1e1e1;border:1px solid #adadad"></div>
<div class="t" style="left:520px;width:91px;text-align:center;top:383.5px;font-size:13.7px;font-family:'Liberation Mono',monospace;color:#000">OK</div>
<div class="a" style="left:520px;top:416px;width:91px;height:26px;background:#e1e1e1;border:1px solid #adadad"></div>
<div class="t" style="left:520px;width:91px;text-align:center;top:423.5px;font-size:13.7px;font-family:'Liberation Mono',monospace;color:#000">close</div>
<div class="a" style="left:520px;top:456px;width:91px;height:26px;background:#e1e1e1;border:1px solid #adadad"></div>
<div class="t" style="left:520px;width:91px;text-align:center;top:463.5px;font-size:13.7px;font-family:'Liberation Mono',monospace;color:#000">open</div>
<div class="a" style="left:640px;top:326px;width:91px;height:26px;background:#e1e1e1;border:1px solid #adadad"></div>
<div class="t" style="left:640px;width:91px;text-align:center;top:333.5px;font-size:13.7px;font-family:'Liberation Mono',monospace;color:#000">move</div>
<div class="a" style="left:639px;top:406px;width:16px;height:16px;background:#fff;border:1px solid #333"></div>
<div class="t" style="left:660px;top:408.5px;font-size:13.7px;color:#000;font-family:'Liberation Mono',monospace;font-weight:normal;letter-spacing:0px;">CheckBox</div>
<div class="a" style="left:289px;top:506px;width:321px;height:81px;background:#fff;border:1px solid #7a7a7a"></div>
<div class="a" style="left:1402px;top:96px;width:518px;height:23px;background:#d9d9d9;border:1px solid #c8c8c8"></div>
<div class="t" style="left:1407px;top:101.4px;font-size:14.7px;color:#000;font-family:'Liberation Sans',sans-serif;font-weight:normal;letter-spacing:0px;">对象查看器</div>
<svg style="left:1875px;top:101px" width="12" height="12"><path d="M3.5 3.5V1.5H10.5V7.5H8.5" fill="none" stroke="#333" stroke-width="1.2"/><rect x="1.5" y="4.5" width="7" height="6" fill="none" stroke="#333" stroke-width="1.4"/><rect x="1.5" y="4.5" width="7" height="2" fill="#333"/></svg>
<svg style="left:1899px;top:101px" width="12" height="12"><path d="M1.5 1.5L10.5 10.5M10.5 1.5L1.5 10.5" stroke="#333" stroke-width="1.6"/></svg>
<div class="a" style="left:1402px;top:121px;width:518px;height:24px;background:#fff;border:1px solid #7a7a7a"></div>
<div class="t" style="left:1404px;top:126.5px;font-size:14px;color:#7c7c7c;font-family:'Liberation Mono',monospace;letter-spacing:-0.2px">Filter</div>
<div class="a" style="left:1402px;top:152px;width:518px;height:165px;background:#fff;border:1px solid #828790"></div>
<div class="t" style="left:1407px;top:160.8px;font-size:15px;color:#000;font-family:'Liberation Sans',sans-serif;font-weight:normal;letter-spacing:0px;">对象</div>
<div class="t" style="left:1590px;top:160.8px;font-size:15px;color:#000;font-family:'Liberation Sans',sans-serif;font-weight:normal;letter-spacing:0px;">类</div>
<div class="a" style="left:1585px;top:153px;width:1px;height:27px;background:#e5e5e5"></div>
<div class="a" style="left:1428px;top:182px;width:470px;height:22px;background:#d9d9d9"></div>
<div class="a" style="left:1453px;top:204px;width:445px;height:23px;background:#f7f7f7"></div>
<div class="a" style="left:1478px;top:249px;width:420px;height:23px;background:#f7f7f7"></div>
<div class="a" style="left:1478px;top:294px;width:420px;height:22px;background:#f7f7f7"></div>
<svg style="left:1409px;top:189px" width="13" height="9"><path d="M1.5 1.5L6.5 6.5L11.5 1.5" fill="none" stroke="#444" stroke-width="1.4"/></svg>
<div class="t" style="left:1431px;top:185.7px;font-size:16px;color:#000;font-family:'Liberation Sans',sans-serif;font-weight:normal;letter-spacing:0.2px;">MainWindow</div>
<div class="t" style="left:1590px;top:185.7px;font-size:16px;color:#000;font-family:'Liberation Sans',sans-serif;font-weight:normal;letter-spacing:0.2px;">QMainWindow</div>
<svg style="left:1434px;top:212px" width="13" height="9"><path d="M1.5 1.5L6.5 6.5L11.5 1.5" fill="none" stroke="#444" stroke-width="1.4"/></svg>
<svg style="left:1455px;top:205px" width="22" height="22"><g fill="#c8d4e4" stroke="#5a6a80" stroke-width=".8"><rect x="1" y="1.5" width="8" height="4"/><rect x="10" y="1.5" width="8" height="4"/><rect x="1" y="7" width="8" height="4"/><rect x="1" y="12.5" width="8" height="4"/></g><circle cx="13.5" cy="14" r="6" fill="#d23a2a" stroke="#8a1a10" stroke-width=".8"/><path d="M10.5 17L16.5 11" stroke="#f0c0b0" stroke-width="1.6"/></svg>
<div class="t" style="left:1482px;top:208.7px;font-size:16px;color:#000;font-family:'Liberation Sans',sans-serif;font-weight:normal;letter-spacing:0.2px;">centralwidget</div>
<div class="t" style="left:1590px;top:208.7px;font-size:16px;color:#000;font-family:'Liberation Sans',sans-serif;font-weight:normal;letter-spacing:0.2px;">QWidget</div>
<div class="t" style="left:1481px;top:231.7px;font-size:16px;color:#000;font-family:'Liberation Sans',sans-serif;font-weight:normal;letter-spacing:0.2px;">alpha</div>
<div class="t" style="left:1590px;top:231.7px;font-size:16px;color:#000;font-family:'Liberation Sans',sans-serif;font-weight:normal;letter-spacing:0.2px;">QLineEdit</div>
<div class="t" style="left:1481px;top:253.7px;font-size:16px;color:#000;font-family:'Liberation Sans',sans-serif;font-weight:normal;letter-spacing:0.2px;">bote</div>
<div class="t" style="left:1590px;top:253.7px;font-size:16px;color:#000;font-family:'Liberation Sans',sans-serif;font-weight:normal;letter-spacing:0.2px;">QLineEdit</div>
<div class="t" style="left:1481px;top:275.7px;font-size:16px;color:#000;font-family:'Liberation Sans',sans-serif;font-weight:normal;letter-spacing:0.2px;">checkBox</div>
<div class="t" style="left:1590px;top:275.7px;font-size:16px;color:#000;font-family:'Liberation Sans',sans-serif;font-weight:normal;letter-spacing:0.2px;">QCheckBox</div>
<div class="t" style="left:1481px;top:297.7px;font-size:16px;color:#000;font-family:'Liberation Sans',sans-serif;font-weight:normal;letter-spacing:0.2px;">clo</div>
<div class="t" style="left:1590px;top:297.7px;font-size:16px;color:#000;font-family:'Liberation Sans',sans-serif;font-weight:normal;letter-spacing:0.2px;">QPushButton</div>
<div class="a" style="left:1898px;top:153px;width:21px;height:163px;background:#f0f0f0"></div>
<div class="a" style="left:1899px;top:174px;width:19px;height:33px;background:#cdcdcd"></div>
<svg style="left:1902px;top:158px" width="12" height="10"><path d="M1.5 7L6 2.5L10.5 7" fill="none" stroke="#505050" stroke-width="1.8"/></svg>
<svg style="left:1902px;top:301px" width="12" height="10"><path d="M1.5 2.5L6 7L10.5 2.5" fill="none" stroke="#505050" stroke-width="1.8"/></svg>
<div class="a" style="left:1402px;top:323px;width:518px;height:23px;background:#d9d9d9;border:1px solid #c8c8c8"></div>
<div class="t" style="left:1407px;top:328.4px;font-size:14.7px;color:#000;font-family:'Liberation Sans',sans-serif;font-weight:normal;letter-spacing:0px;">属性编辑器</div>
<svg style="left:1875px;top:328px" width="12" height="12"><path d="M3.5 3.5V1.5H10.5V7.5H8.5" fill="none" stroke="#333" stroke-width="1.2"/><rect x="1.5" y="4.5" width="7" height="6" fill="none" stroke="#333" stroke-width="1.4"/><rect x="1.5" y="4.5" width="7" height="2" fill="#333"/></svg>
<svg style="left:1899px;top:328px" width="12" height="12"><path d="M1.5 1.5L10.5 10.5M10.5 1.5L1.5 10.5" stroke="#333" stroke-width="1.6"/></svg>
<div class="a" style="left:1404px;top:356px;width:403px;height:24px;background:#fff;border:1px solid #7a7a7a"></div>
<div class="t" style="left:1406px;top:361.5px;font-size:14px;color:#7c7c7c;font-family:'Liberation Mono',monospace;letter-spacing:-0.2px">Filter</div>
<svg style="left:1812px;top:355px" width="28" height="28"><path d="M9 2H14V9H21V14H14V21H9V14H2V9H9Z" fill="#3ec43a" stroke="#2a8a22" stroke-width="1"/><path d="M10 3H13V10H20V11H13V20H10Z" fill="#8ae07a" opacity=".6"/><path d="M20 22L26 22L23 25Z" fill="#111"/></svg>
<div class="a" style="left:1851px;top:366px;width:22px;height:5px;background:linear-gradient(#e8e8e8,#c8c8c8);border:1px solid #c0c0c0;border-radius:2px"></div>
<svg style="left:1884px;top:354px" width="30" height="30"><path d="M3 25L19 9" stroke="#777" stroke-width="3" stroke-linecap="round"/><path d="M3 25L19 9" stroke="#ddd" stroke-width="1"/><path d="M17 5Q21 1 25 3L21 7L23 9L27 5Q28 10 23 12Z" fill="#999" stroke="#555" stroke-width=".8"/><path d="M22 22H28L25 25Z" fill="#111"/></svg>
<div class="a" style="left:1402px;top:388px;width:518px;height:20px;background:#f0f0f0;border:1px solid #dcdcdc"></div>
<div class="t" style="left:1405px;top:391.5px;font-size:13.7px;color:#000;font-family:'Liberation Mono',monospace;font-weight:normal;letter-spacing:0px;">MainWindow : QMainWindow</div>
<div class="a" style="left:1402px;top:408px;width:518px;height:369px;background:#fff;border:1px solid #828790"></div>
<div class="t" style="left:1407px;top:417.2px;font-size:15px;color:#000;font-family:'Liberation Sans',sans-serif;font-weight:normal;letter-spacing:0px;">属性</div>
<div class="t" style="left:1733px;top:417.2px;font-size:15px;color:#000;font-family:'Liberation Sans',sans-serif;font-weight:normal;letter-spacing:0px;">值</div>
<div class="a" style="left:1727px;top:409px;width:1px;height:29px;background:#e5e5e5"></div>
<div class="a" style="left:1403px;top:438px;width:495px;height:23px;background:#a0a0a0"></div>
<svg style="left:1404px;top:445px" width="13" height="9"><path d="M1.5 1.5L6.5 6.5L11.5 1.5" fill="none" stroke="#333" stroke-width="1.5"/></svg>
<div class="t" style="left:1426px;top:443.4px;font-size:15px;color:#fff;font-family:'Liberation Sans',sans-serif;font-weight:bold;letter-spacing:0.5px;">QObject</div>
<div class="a" style="left:1403px;top:461px;width:495px;height:24px;background:#fdeedb;border-bottom:1px solid #dcdcdc"></div>
<div class="a" style="left:1403px;top:461px;width:25px;height:23px;background:#fde3c4"></div>
<div class="a" style="left:1727px;top:461px;width:1px;height:24px;background:#dcdcdc"></div>
<div class="t" style="left:1431px;top:466.4px;font-size:16px;color:#000;font-family:'Liberation Sans',sans-serif;font-weight:bold;letter-spacing:0.35px;">objectName</div>
<div class="t" style="left:1731px;top:466.4px;font-size:16px;color:#000;font-family:'Liberation Sans',sans-serif;font-weight:normal;letter-spacing:0.2px;">MainWindow</div>
<div class="a" style="left:1403px;top:485px;width:495px;height:24px;background:#a0a0a0"></div>
<svg style="left:1404px;top:493px" width="13" height="9"><path d="M1.5 1.5L6.5 6.5L11.5 1.5" fill="none" stroke="#333" stroke-width="1.5"/></svg>
<div class="t" style="left:1426px;top:490.9px;font-size:15px;color:#fff;font-family:'Liberation Sans',sans-serif;font-weight:bold;letter-spacing:0.5px;">QWidget</div>
<div class="a" style="left:1403px;top:509px;width:495px;height:24px;background:#fffee7;border-bottom:1px solid #dcdcdc"></div>
<div class="a" style="left:1403px;top:509px;width:25px;height:23px;background:#fffbc8"></div>
<div class="a" style="left:1727px;top:509px;width:1px;height:24px;background:#dcdcdc"></div>
<div class="t" style="left:1431px;top:514.4px;font-size:16px;color:#000;font-family:'Liberation Sans',sans-serif;font-weight:normal;letter-spacing:0.2px;">windowModality</div>
<div class="t" style="left:1731px;top:514.4px;font-size:16px;color:#000;font-family:'Liberation Sans',sans-serif;font-weight:normal;letter-spacing:0.2px;">NonModal</div>
<div class="a" style="left:1403px;top:533px;width:495px;height:24px;background:#fffbc6;border-bottom:1px solid #dcdcdc"></div>
<div class="a" style="left:1403px;top:533px;width:25px;height:23px;background:#fffbc6"></div>
<div class="a" style="left:1727px;top:533px;width:1px;height:24px;background:#dcdcdc"></div>
<div class="t" style="left:1431px;top:538.4px;font-size:16px;color:#000;font-family:'Liberation Sans',sans-serif;font-weight:normal;letter-spacing:0.2px;">enabled</div>
<svg style="left:1731px;top:537px" width="17" height="17"><rect x=".5" y=".5" width="15" height="15" fill="#fff" stroke="#333"/><path d="M3 8L6.5 11.5L13 4" fill="none" stroke="#333" stroke-width="1.2"/></svg>
<div class="a" style="left:1403px;top:557px;width:495px;height:24px;background:#fffee7;border-bottom:1px solid #dcdcdc"></div>
<div class="a" style="left:1403px;top:557px;width:25px;height:23px;background:#fffbc8"></div>
<div class="a" style="left:1727px;top:557px;width:1px;height:24px;background:#dcdcdc"></div>
<svg style="left:1411px;top:563px" width="9" height="13"><path d="M1.5 1.5L6.5 6.5L1.5 11.5" fill="none" stroke="#777" stroke-width="1.2"/></svg>
<div class="t" style="left:1431px;top:562.4px;font-size:16px;color:#000;font-family:'Liberation Sans',sans-serif;font-weight:bold;letter-spacing:0.35px;">geometry</div>
<div class="t" style="left:1731px;top:562.4px;font-size:16px;color:#000;font-family:'Liberation Sans',sans-serif;font-weight:normal;letter-spacing:0.2px;">[(0, 0), 542 x 508]</div>
<div class="a" style="left:1403px;top:581px;width:495px;height:24px;background:#fffbc6;border-bottom:1px solid #dcdcdc"></div>
<div class="a" style="left:1403px;top:581px;width:25px;height:23px;background:#fffbc6"></div>
<div class="a" style="left:1727px;top:581px;width:1px;height:24px;background:#dcdcdc"></div>
<svg style="left:1411px;top:587px" width="9" height="13"><path d="M1.5 1.5L6.5 6.5L1.5 11.5" fill="none" stroke="#777" stroke-width="1.2"/></svg>
<div class="t" style="left:1431px;top:586.4px;font-size:16px;color:#000;font-family:'Liberation Sans',sans-serif;font-weight:normal;letter-spacing:0.2px;">sizePolicy</div>
<div class="t" style="left:1731px;top:586.4px;font-size:16px;color:#000;font-family:'Liberation Sans',sans-serif;font-weight:normal;letter-spacing:-0.05px;">[Preferred, Preferred...</div>
<div class="a" style="left:1403px;top:605px;width:495px;height:24px;background:#fffee7;border-bottom:1px solid #dcdcdc"></div>
<div class="a" style="left:1403px;top:605px;width:25px;height:23px;background:#fffbc8"></div>
<div class="a" style="left:1727px;top:605px;width:1px;height:24px;background:#dcdcdc"></div>
<svg style="left:1411px;top:611px" width="9" height="13"><path d="M1.5 1.5L6.5 6.5L1.5 11.5" fill="none" stroke="#777" stroke-width="1.2"/></svg>
<div class="t" style="left:1431px;top:610.4px;font-size:16px;color:#000;font-family:'Liberation Sans',sans-serif;font-weight:normal;letter-spacing:0.2px;">minimumSize</div>
<div class="t" style="left:1731px;top:610.4px;font-size:16px;color:#000;font-family:'Liberation Sans',sans-serif;font-weight:normal;letter-spacing:0.2px;">0 x 0</div>
<div class="a" style="left:1403px;top:629px;width:495px;height:24px;background:#fffbc6;border-bottom:1px solid #dcdcdc"></div>
<div class="a" style="left:1403px;top:629px;width:25px;height:23px;background:#fffbc6"></div>
<div class="a" style="left:1727px;top:629px;width:1px;height:24px;background:#dcdcdc"></div>
<svg style="left:1411px;top:635px" width="9" height="13"><path d="M1.5 1.5L6.5 6.5L1.5 11.5" fill="none" stroke="#777" stroke-width="1.2"/></svg>
<div class="t" style="left:1431px;top:634.4px;font-size:16px;color:#000;font-family:'Liberation Sans',sans-serif;font-weight:normal;letter-spacing:0.2px;">maximumSize</div>
<div class="t" style="left:1731px;top:634.4px;font-size:16px;color:#000;font-family:'Liberation Sans',sans-serif;font-weight:normal;letter-spacing:0.2px;">16777215 x 16777215</div>
<div class="a" style="left:1403px;top:653px;width:495px;height:24px;background:#fffee7;border-bottom:1px solid #dcdcdc"></div>
<div class="a" style="left:1403px;top:653px;width:25px;height:23px;background:#fffbc8"></div>
<div class="a" style="left:1727px;top:653px;width:1px;height:24px;background:#dcdcdc"></div>
<svg style="left:1411px;top:659px" width="9" height="13"><path d="M1.5 1.5L6.5 6.5L1.5 11.5" fill="none" stroke="#777" stroke-width="1.2"/></svg>
<div class="t" style="left:1431px;top:658.4px;font-size:16px;color:#000;font-family:'Liberation Sans',sans-serif;font-weight:normal;letter-spacing:0.2px;">sizeIncrement</div>
<div class="t" style="left:1731px;top:658.4px;font-size:16px;color:#000;font-family:'Liberation Sans',sans-serif;font-weight:normal;letter-spacing:0.2px;">0 x 0</div>
<div class="a" style="left:1403px;top:677px;width:495px;height:24px;background:#fffbc6;border-bottom:1px solid #dcdcdc"></div>
<div class="a" style="left:1403px;top:677px;width:25px;height:23px;background:#fffbc6"></div>
<div class="a" style="left:1727px;top:677px;width:1px;height:24px;background:#dcdcdc"></div>
<svg style="left:1411px;top:683px" width="9" height="13"><path d="M1.5 1.5L6.5 6.5L1.5 11.5" fill="none" stroke="#777" stroke-width="1.2"/></svg>
<div class="t" style="left:1431px;top:682.4px;font-size:16px;color:#000;font-family:'Liberation Sans',sans-serif;font-weight:normal;letter-spacing:0.2px;">baseSize</div>
<div class="t" style="left:1731px;top:682.4px;font-size:16px;color:#000;font-family:'Liberation Sans',sans-serif;font-weight:normal;letter-spacing:0.2px;">0 x 0</div>
<div class="a" style="left:1403px;top:701px;width:495px;height:24px;background:#fffee7;border-bottom:1px solid #dcdcdc"></div>
<div class="a" style="left:1403px;top:701px;width:25px;height:23px;background:#fffbc8"></div>
<div class="a" style="left:1727px;top:701px;width:1px;height:24px;background:#dcdcdc"></div>
<div class="t" style="left:1431px;top:706.4px;font-size:16px;color:#000;font-family:'Liberation Sans',sans-serif;font-weight:normal;letter-spacing:0.2px;">palette</div>
<div class="t" style="left:1731px;top:706.4px;font-size:16px;color:#000;font-family:'Liberation Sans',sans-serif;font-weight:normal;letter-spacing:0.2px;">继承</div>
<div class="a" style="left:1403px;top:725px;width:495px;height:24px;background:#fffbc6;border-bottom:1px solid #dcdcdc"></div>
<div class="a" style="left:1403px;top:725px;width:25px;height:23px;background:#fffbc6"></div>
<div class="a" style="left:1727px;top:725px;width:1px;height:24px;background:#dcdcdc"></div>
<svg style="left:1407px;top:733px" width="13" height="9"><path d="M1.5 1.5L6.5 6.5L11.5 1.5" fill="none" stroke="#444" stroke-width="1.4"/></svg>
<div class="t" style="left:1431px;top:730.4px;font-size:16px;color:#000;font-family:'Liberation Sans',sans-serif;font-weight:normal;letter-spacing:0.2px;">font</div>
<div class="t" style="left:1733px;top:729.7px;font-size:16px;color:#222;font-family:'Liberation Serif',serif;font-weight:normal;letter-spacing:0px;">A</div>
<div class="t" style="left:1753px;top:729.7px;font-size:16px;color:#000;font-family:'Liberation Sans',sans-serif;font-weight:normal;letter-spacing:0.2px;">[SimSun, 9]</div>
<div class="a" style="left:1403px;top:749px;width:495px;height:24px;background:#fffee7;border-bottom:1px solid #dcdcdc"></div>
<div class="a" style="left:1403px;top:749px;width:50px;height:23px;background:#fffbc8"></div>
<div class="a" style="left:1727px;top:749px;width:1px;height:24px;background:#dcdcdc"></div>
<div class="t" style="left:1456px;top:754.4px;font-size:16px;color:#000;font-family:'Liberation Sans',sans-serif;font-weight:normal;letter-spacing:0.2px;">字体族</div>
<div class="t" style="left:1731px;top:754.4px;font-size:16px;color:#000;font-family:'Liberation Sans',sans-serif;font-weight:normal;letter-spacing:0.2px;">Adobe Heiti Std</div>
<div class="a" style="left:1403px;top:773px;width:495px;height:3px;background:#fffbc6;border-bottom:1px solid #dcdcdc"></div>
<div class="a" style="left:1403px;top:773px;width:25px;height:2px;background:#fffbc6"></div>
<div class="a" style="left:1727px;top:773px;width:1px;height:3px;background:#dcdcdc"></div>
<div class="a" style="left:1898px;top:409px;width:21px;height:367px;background:#f0f0f0"></div>
<div class="a" style="left:1899px;top:431px;width:19px;height:87px;background:#cdcdcd"></div>
<svg style="left:1902px;top:414px" width="12" height="10"><path d="M1.5 7L6 2.5L10.5 7" fill="none" stroke="#505050" stroke-width="1.8"/></svg>
<svg style="left:1902px;top:761px" width="12" height="10"><path d="M1.5 2.5L6 7L10.5 2.5" fill="none" stroke="#505050" stroke-width="1.8"/></svg>
<div class="a" style="left:1402px;top:784px;width:518px;height:23px;background:#d9d9d9;border:1px solid #c8c8c8"></div>
<div class="t" style="left:1407px;top:789.4px;font-size:14.7px;color:#000;font-family:'Liberation Sans',sans-serif;font-weight:normal;letter-spacing:0px;">资源浏览器</div>
<svg style="left:1875px;top:789px" width="12" height="12"><path d="M3.5 3.5V1.5H10.5V7.5H8.5" fill="none" stroke="#333" stroke-width="1.2"/><rect x="1.5" y="4.5" width="7" height="6" fill="none" stroke="#333" stroke-width="1.4"/><rect x="1.5" y="4.5" width="7" height="2" fill="#333"/></svg>
<svg style="left:1899px;top:789px" width="12" height="12"><path d="M1.5 1.5L10.5 10.5M10.5 1.5L1.5 10.5" stroke="#333" stroke-width="1.6"/></svg>
<svg style="left:1405px;top:812px" width="26" height="26"><path d="M3 23L5 17L20 2L24 6L9 21Z" fill="#f0b030" stroke="#9a6a10" stroke-width=".8"/><path d="M20 2L24 6L22 8L18 4Z" fill="#e07050"/><path d="M3 23L5 17L9 21Z" fill="#f4dcb0"/></svg>
<svg style="left:1436px;top:814px" width="24" height="24"><path d="M18 7A8 8 0 1 0 19 15" fill="none" stroke="#1e9a2a" stroke-width="4.5"/><path d="M13 2L22 3L20 11Z" fill="#1e9a2a"/></svg>
<div class="a" style="left:1690px;top:813px;width:228px;height:24px;background:#fff;border:1px solid #7a7a7a"></div>
<div class="t" style="left:1692px;top:818.5px;font-size:14px;color:#7c7c7c;font-family:'Liberation Mono',monospace;letter-spacing:-0.2px">Filter</div>
<div class="a" style="left:1402px;top:841px;width:256px;height:141px;background:#fff;border:1px solid #828790"></div>
<div class="t" style="left:1433px;top:845.7px;font-size:16px;color:#000;font-family:'Liberation Sans',sans-serif;font-weight:normal;letter-spacing:0.2px;">&lt;resource root&gt;</div>
<div class="a" style="left:1664px;top:841px;width:256px;height:141px;background:#fff;border:1px solid #828790"></div>
<div class="a" style="left:1404px;top:982px;width:126px;height:22px;background:#f0f0f0;border:1px solid #d9d9d9;border-top:none"></div>
<div class="a" style="left:1531px;top:982px;width:103px;height:22px;background:#f0f0f0;border:1px solid #d9d9d9;border-top:none"></div>
<div class="a" style="left:1634px;top:981px;width:107px;height:24px;background:#fff;border:1px solid #d9d9d9;border-top:none"></div>
<div class="t" style="left:1418px;top:984.2px;font-size:15px;color:#000;font-family:'Liberation Sans',sans-serif;font-weight:normal;letter-spacing:0px;">信号/槽编辑器</div>
<div class="t" style="left:1545px;top:984.2px;font-size:15px;color:#000;font-family:'Liberation Sans',sans-serif;font-weight:normal;letter-spacing:0px;">动作编辑器</div>
<div class="t" style="left:1650px;top:985.2px;font-size:15px;color:#000;font-family:'Liberation Sans',sans-serif;font-weight:normal;letter-spacing:0px;">资源浏览器</div>
<div class="a" style="left:0px;top:1030px;width:1920px;height:50px;background:linear-gradient(90deg,#d3e8d3 0%,#d6e8d4 55%,#dfe4d6 58.5%,#e6ddd8 61%,#e8dcd9 64%,#dfe3d5 67%,#d3e7d3 70%,#d6e6d2 82%,#d9e8d8 100%)"></div>
<div class="a" style="left:60px;top:1030px;width:430px;height:50px;background:#fff;border-top:1px solid #d0d0d0;border-left:1px solid #d8d8d8"></div>
<svg style="left:20px;top:1045px" width="21" height="21"><path d="M0 3L9 1.7V10H0ZM10 1.5L20.5 0V10H10ZM0 11H9V19.3L0 18ZM10 11H20.5V21L10 19.5Z" fill="#000"/></svg>
<svg style="left:74px;top:1044px" width="22" height="22"><circle cx="13" cy="8.5" r="6.5" fill="none" stroke="#000" stroke-width="1.6"/><path d="M8.5 13L2 19.5" stroke="#000" stroke-width="1.8"/></svg>
<div class="t" style="left:110px;top:1046.2px;font-size:18.7px;color:#222;font-family:'Liberation Sans',sans-serif;font-weight:normal;letter-spacing:0px;">在这里输入你要搜索的内容</div>
<svg style="left:508px;top:1043px" width="24" height="24"><circle cx="12" cy="12" r="8.8" fill="none" stroke="#000" stroke-width="2"/></svg>
<svg style="left:569px;top:1044px" width="24" height="22"><path d="M1 1H14M1 19H14M3 5H12V15H3Z" fill="none" stroke="#000" stroke-width="1.4"/><path d="M19 1V19" stroke="#000" stroke-width="1.4"/><rect x="17.5" y="7" width="3" height="3" fill="#000"/></svg>
<svg style="left:629px;top:1041px" width="30" height="28"><path d="M1 4Q1 2 3 2H10L12 4H1Z" fill="#e8a21e"/><rect x="1" y="4" width="27" height="20" rx="1.5" fill="#fcd15f"/><rect x="1" y="4" width="27" height="3" fill="#f3bd3f"/><path d="M6 23V16H22V23H18.5V19H9.5V23Z" fill="#2a7fd6"/></svg>
<svg style="left:690px;top:1040px" width="32" height="30"><path d="M1 10L16 1L31 10V29H1Z" fill="#0a5db8"/><path d="M1 10L16 20L31 10V29H1Z" fill="#2ea8f0"/><path d="M4 10L16 4L28 10L16 17Z" fill="#f4f4f4"/><path d="M1 29L31 10V29Z" fill="#1a8ad8" opacity=".7"/></svg>
<svg style="left:752px;top:1039px" width="34" height="32"><path d="M3 16Q4 3 17 2Q29 2 31 13Q31 19 25 19H12Q12 24 19 25Q24 25 28 23Q24 30 16 30Q6 30 3 21Z" fill="#1ea2e0"/><path d="M17 2Q29 2 31 13Q31 19 25 19H14Q17 13 23 12Q21 5 17 2Z" fill="#58c85a" opacity=".9"/><path d="M3 21Q4 30 16 30Q24 30 28 23Q24 25 19 25Q10 25 10 17Z" fill="#0b4ea2"/><circle cx="9" cy="23" r="7" fill="#c8c8c8" stroke="#fff"/><circle cx="9" cy="21" r="2.5" fill="#888"/><path d="M4.5 27Q9 22 13.5 27" fill="#888"/></svg>
<svg style="left:817px;top:1041px" width="28" height="28"><rect x="1" y="1" width="26" height="26" rx="2" fill="#3a2d9a"/><rect x="1" y="1" width="26" height="26" rx="2" fill="none" stroke="#6a3a9a"/><path d="M3 4L10 12" stroke="#ddd" stroke-width=".8"/><circle cx="8" cy="10" r="3" fill="#c8e040"/><text x="5" y="22" font-family="Liberation Serif" font-size="11" fill="#f0d020">T</text><text x="11" y="25" font-family="Liberation Serif" font-size="10" fill="#f0d020">E</text><text x="17" y="22" font-family="Liberation Serif" font-size="11" fill="#f0d020">X</text></svg>
<svg style="left:876px;top:1041px" width="34" height="28"><ellipse cx="12" cy="10" rx="10.5" ry="9" fill="#34c85a"/><path d="M5 16L4 21L9 18Z" fill="#34c85a"/><circle cx="8.5" cy="8" r="1.3" fill="#1a6a30"/><circle cx="15" cy="8" r="1.3" fill="#1a6a30"/><ellipse cx="22" cy="18" rx="9" ry="7.5" fill="#f0f0f0"/><path d="M27 23L29 27L24 24Z" fill="#f0f0f0"/><circle cx="19" cy="17" r="1.1" fill="#888"/><circle cx="25" cy="17" r="1.1" fill="#888"/></svg>
<svg style="left:938px;top:1043px" width="32" height="26"><path d="M1 2H8L13 15L16 7H21L18 15L23 2H30L21 24H16L15.5 19L13 24H9Z" fill="#e8281e"/><path d="M21 7L23 2H30L26 11Z" fill="#ff6a3a"/></svg>
<svg style="left:1002px;top:1041px" width="28" height="28"><rect x="1" y="1" width="26" height="26" fill="#f2e62a"/><rect x="3" y="3" width="22" height="22" fill="#000"/><text x="5.5" y="14" font-family="Liberation Sans" font-weight="bold" font-size="9.5" fill="#fff">PC</text><rect x="6" y="20" width="7" height="1.6" fill="#fff"/></svg>
<div class="a" style="left:1048px;top:1030px;width:61px;height:50px;background:rgba(255,255,255,.55)"></div>
<svg style="left:1064px;top:1044px" width="28" height="22"><path d="M4 1H27V15L23 20H1V5Z" fill="#3fbf4a"/><path d="M27 9V15L23 20H12Z" fill="#2aa138" opacity=".7"/><text x="9" y="16.5" font-family="Liberation Sans" font-weight="bold" font-size="14" fill="#fff">D</text></svg>
<div class="a" style="left:619px;top:1077px;width:51px;height:3px;background:#0b6dd6"></div>
<div class="a" style="left:660px;top:1077px;width:10px;height:3px;background:#7ab0e8"></div>
<div class="a" style="left:743px;top:1077px;width:51px;height:3px;background:#0b6dd6"></div>
<div class="a" style="left:784px;top:1077px;width:10px;height:3px;background:#7ab0e8"></div>
<div class="a" style="left:867px;top:1077px;width:51px;height:3px;background:#0b6dd6"></div>
<div class="a" style="left:929px;top:1077px;width:51px;height:3px;background:#0b6dd6"></div>
<div class="a" style="left:970px;top:1077px;width:10px;height:3px;background:#7ab0e8"></div>
<div class="a" style="left:991px;top:1077px;width:51px;height:3px;background:#0b6dd6"></div>
<div class="a" style="left:1048px;top:1077px;width:61px;height:3px;background:#0b6dd6"></div>
<svg style="left:1453px;top:1043px" width="32" height="24"><path d="M6 20Q1 20 1 15Q1 11 6 10Q7 3 15 3Q22 3 24 9Q30 9 30 15Q30 20 25 20Z" fill="#c4e2f8" stroke="#e8f4fc"/><path d="M4 18Q10 14 26 18" fill="none" stroke="#9ccaf0" stroke-width="1"/></svg>
<div class="t" style="left:1493px;top:1046.6px;font-size:18px;color:#111;font-family:'Liberation Sans',sans-serif;font-weight:normal;letter-spacing:0.6px;">7°C  多云</div>
<svg style="left:1588px;top:1048px" width="14" height="10"><path d="M1 8L7 2L13 8" fill="none" stroke="#000" stroke-width="1.2"/></svg>
<svg style="left:1616px;top:1043px" width="24" height="24"><path d="M2 4L20 2V19L2 18Z" fill="none" stroke="#111" stroke-width="1.2"/><path d="M7 11A4 4 0 0 1 14 9M14 13A4 4 0 0 1 8 14" fill="none" stroke="#111"/><circle cx="17" cy="18" r="4" fill="#2a6cc8"/></svg>
<svg style="left:1648px;top:1044px" width="20" height="22"><ellipse cx="10" cy="13" rx="7" ry="8" fill="#111"/><ellipse cx="10" cy="15" rx="4.5" ry="5" fill="#fff"/><circle cx="8" cy="8" r="1.2" fill="#fff"/><circle cx="12" cy="8" r="1.2" fill="#fff"/><path d="M3 11Q10 14 17 11L16 13Q10 16 4 13Z" fill="#e8288a"/><circle cx="14" cy="3" r="2.5" fill="#e8288a"/><path d="M6 20H9M11 20H14" stroke="#f0a020" stroke-width="2"/></svg>
<svg style="left:1678px;top:1048px" width="22" height="14"><rect x="1" y="2" width="17" height="10" fill="none" stroke="#111" stroke-width="1.4"/><rect x="3" y="4" width="5" height="6" fill="#111"/><rect x="18.5" y="5" width="2" height="4" fill="#111"/></svg>
<svg style="left:1707px;top:1046px" width="22" height="18"><path d="M1 6H4L9 2V16L4 12H1Z" fill="none" stroke="#111" stroke-width="1.2"/><path d="M12 6L18 12M18 6L12 12" stroke="#111" stroke-width="1.2"/></svg>
<div class="t" style="left:1738px;top:1046.6px;font-size:18px;color:#111;font-family:'Liberation Sans',sans-serif;font-weight:normal;letter-spacing:0px;">英</div>
<div class="t" style="left:1770px;width:72px;text-align:center;top:1035px;font-size:15.5px;color:#111">11:20</div>
<div class="t" style="left:1770px;width:72px;text-align:center;top:1058px;font-size:15.5px;color:#111">2022/1/9</div>
<svg style="left:1866px;top:1044px" width="36" height="26"><path d="M3 2H21V15H12L8 19V15H3Z" fill="#111"/><path d="M6 6H18M6 9H18M6 12H14" stroke="#fff" stroke-width="1.2"/><circle cx="22" cy="16" r="8" fill="#c8c8c8" stroke="#777"/><text x="18.5" y="21" font-family="Liberation Sans" font-weight="bold" font-size="12" fill="#111">4</text></svg>
<div class="a" style="left:1914px;top:1030px;width:1px;height:50px;background:#b8c8b8"></div>
</body></html>
